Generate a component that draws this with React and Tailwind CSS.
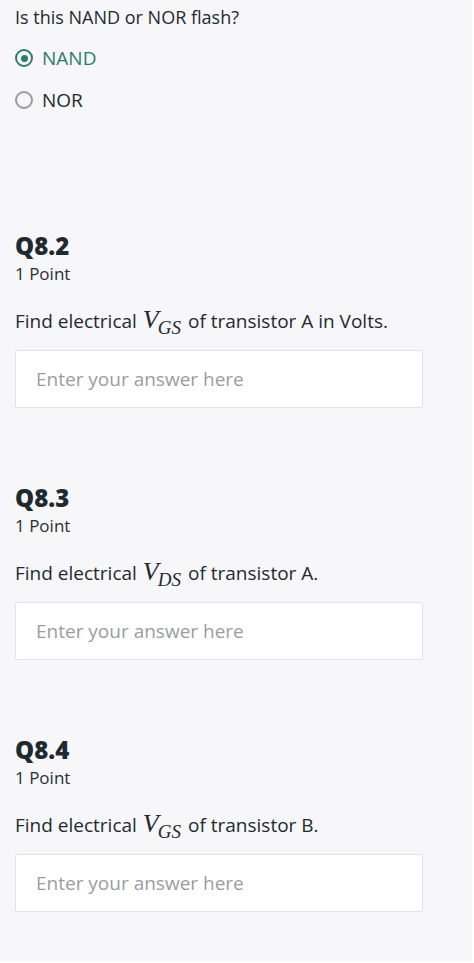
import React from "react";

function Math({ sub }) {
  return (
    <span className="inline-block ml-[6px] mr-[7px]" style={{ fontFamily: '"Liberation Serif", "DejaVu Serif", serif' }}>
      <span className="italic text-[26px] leading-none">V</span>
      <span className="italic text-[19px] leading-none relative top-[6px] -ml-[1px]">{sub}</span>
    </span>
  );
}

function Question({ num, sub, rest }) {
  return (
    <div className="pl-[15px]">
      <div className="text-[24px] font-extrabold leading-[26px] text-[#1f2a30]">{num}</div>
      <div className="text-[17px] leading-[22px] mt-[4px] text-[#2a2f33]">1 Point</div>
      <div className="text-[19px] leading-[26px] mt-[22px] text-[#1f2a30]">
        Find electrical<Math sub={sub} />{rest}
      </div>
      <div className="mt-[15px] w-[408px] h-[58px] bg-white border border-[#e2e3e6] rounded-[2px] flex items-center pl-[20px]">
        <span className="text-[19px] text-[#9a9da1]">Enter your answer here</span>
      </div>
    </div>
  );
}

export default function App() {
  return (
    <div className="bg-white w-[474px] h-[963px]" style={{ fontFamily: '"Open Sans", sans-serif' }}>
      <div className="w-[472px] h-[961px] bg-[#f7f7f9] pt-[5px]">
        <div className="pl-[15px] text-[18px] leading-[24px] text-[#1f2a30]">Is this NAND or NOR flash?</div>
        <div className="pl-[15px] mt-[17px] flex items-center h-[24px]">
          <span className="w-[18px] h-[18px] rounded-full border-[2.5px] border-[#2e7c6d] flex items-center justify-center">
            <span className="w-[7px] h-[7px] rounded-full bg-[#2e7c6d]"></span>
          </span>
          <span className="ml-[9px] text-[19px] text-[#2e7c6d]">NAND</span>
        </div>
        <div className="pl-[15px] mt-[18px] flex items-center h-[24px]">
          <span className="w-[18px] h-[18px] rounded-full border-[2.5px] border-[#9c9c9c]"></span>
          <span className="ml-[9px] text-[19px] text-[#1f2a30]">NOR</span>
        </div>
        <div className="mt-[121px]">
          <Question num="Q8.2" sub="GS" rest="of transistor A in Volts." />
        </div>
        <div className="mt-[77px]">
          <Question num="Q8.3" sub="DS" rest="of transistor A." />
        </div>
        <div className="mt-[77px]">
          <Question num="Q8.4" sub="GS" rest="of transistor B." />
        </div>
      </div>
    </div>
  );
}
